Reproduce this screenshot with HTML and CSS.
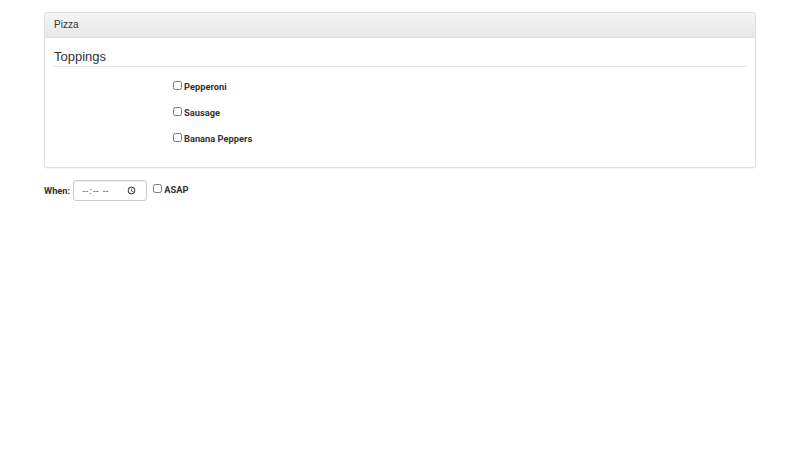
FILE: index.html
```html
<!DOCTYPE html>
<html>
<head>
<meta charset="utf-8">
<link rel="stylesheet" href="styles.css">
</head>
<body>
<div class="page">
  <div class="panel">
    <div class="panel-heading">Pizza</div>
    <div class="panel-body">
      <div class="legend">Toppings</div>
      <div class="options">
        <label class="check"><input type="checkbox"><span>Pepperoni</span></label>
        <label class="check"><input type="checkbox"><span>Sausage</span></label>
        <label class="check"><input type="checkbox"><span>Banana Peppers</span></label>
      </div>
    </div>
  </div>
  <div class="when-row">
    <label class="when-label" for="when">When:</label>
    <input class="time-input" id="when" type="time">
    <label class="check asap"><input type="checkbox"><span>ASAP</span></label>
  </div>
</div>
</body>
</html>
```
FILE: styles.css
```css
html, body {
  margin: 0;
  padding: 0;
  background: #fff;
}
body {
  font-family: "Liberation Sans", Arial, sans-serif;
  color: #333;
}
.page {
  padding: 12px 44px;
}
.panel {
  border: 1px solid #ddd;
  border-radius: 3px;
  box-shadow: 0 1px 1px rgba(0,0,0,0.04);
  overflow: hidden;
}
.panel-heading {
  height: 24px;
  line-height: 24px;
  padding: 0 9px;
  font-size: 10px;
  background: linear-gradient(to bottom, #f5f5f5 0%, #e8e8e8 100%);
  border-bottom: 1px solid #ddd;
}
.panel-body {
  padding: 9px 9px 11px 9px;
}
.legend {
  font-size: 13px;
  line-height: 19px;
  border-bottom: 1px solid #e5e5e5;
  margin-bottom: 6px;
}
.options {
  display: flex;
  flex-direction: column;
  padding-left: 119px;
  margin-bottom: 5px;
}
.check {
  display: flex;
  align-items: center;
  height: 26px;
  font-family: Roboto, "Liberation Sans", sans-serif;
  font-size: 9.3px;
  font-weight: bold;
}
.check input {
  width: 9px;
  height: 9px;
  margin: 0 2px 0 0;
  position: relative;
  top: -1px;
}
.when-row {
  display: flex;
  align-items: center;
  margin-top: 12px;
}
.when-label {
  font-family: Roboto, "Liberation Sans", sans-serif;
  font-size: 9.3px;
  font-weight: bold;
  margin-right: 3px;
}
.time-input {
  box-sizing: border-box;
  width: 74px;
  height: 21px;
  padding: 0 7px;
  border: 1px solid #ccc;
  border-radius: 3px;
  box-shadow: inset 0 1px 1px rgba(0,0,0,0.075);
  font-family: "Liberation Sans", Arial, sans-serif;
  font-size: 9px;
  color: #555;
  margin: 0;
}
.asap {
  height: 21px;
  margin-left: 6px;
  position: relative;
  top: -1px;
}
```
